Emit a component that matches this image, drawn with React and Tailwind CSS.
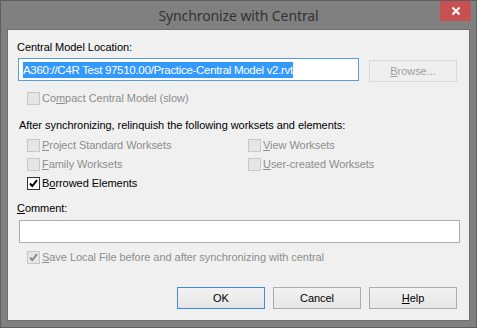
import React from "react";

const ui = { fontFamily: '"Liberation Sans", Arial, sans-serif' };

function Check({ color = "#000" }) {
  return (
    <svg width="11" height="11" viewBox="0 0 11 11" className="block">
      <path d="M2 5.5 L4.3 8 L9 2.2" fill="none" stroke={color} strokeWidth="1.9" />
    </svg>
  );
}

function CheckBox({ label, accel, checked = false, disabled = false, className = "" }) {
  const i = label.indexOf(accel);
  return (
    <div className={`flex items-center h-[13px] ${className}`}>
      <div
        className={`w-[13px] h-[13px] flex items-center justify-center border ${
          disabled ? "border-[#c8c8c8] bg-[#e6e6e6]" : "border-[#333] bg-white"
        }`}
      >
        {checked && <Check color={disabled ? "#8a8a8a" : "#000"} />}
      </div>
      <span
        className={`ml-[2px] text-[11px] leading-[13px] tracking-[-0.05px] ${
          disabled ? "text-[#8d8d8d]" : "text-black"
        }`}
      >
        {i >= 0 ? (
          <>
            {label.slice(0, i)}
            <u className="underline-offset-1">{accel}</u>
            {label.slice(i + 1)}
          </>
        ) : (
          label
        )}
      </span>
    </div>
  );
}

function Button({ children, primary, disabled }) {
  return (
    <div
      className={`w-[88px] h-[22px] flex items-center justify-center text-[11px] tracking-[-0.05px] border ${
        disabled
          ? "border-[#d9d9d9] bg-[#efefef] text-[#a0a0a0]"
          : primary
          ? "border-[#3c8be0] bg-gradient-to-b from-[#f2f2f2] to-[#e6e6e6] text-black"
          : "border-[#adadad] bg-gradient-to-b from-[#f2f2f2] to-[#e6e6e6] text-black"
      }`}
    >
      {children}
    </div>
  );
}

export default function App() {
  return (
    <div className="w-[477px] h-[328px] bg-[#808080] border border-[#5e5e5e] flex flex-col" style={ui}>
      {/* title bar */}
      <div className="relative h-[28px] flex items-center justify-center">
        <span className="text-[14px] text-[#333] tracking-[-0.1px] mt-[1px]" style={{ fontFamily: '"Noto Sans", "Open Sans", sans-serif' }}>
          Synchronize with Central
        </span>
        <div className="absolute right-[5px] top-0 w-[31px] h-[20px] bg-[#c75050] flex items-center justify-center">
          <svg width="10" height="10" viewBox="0 0 10 10">
            <path d="M1.5 1.5 L8.5 8.5 M8.5 1.5 L1.5 8.5" stroke="#fff" strokeWidth="2" />
          </svg>
        </div>
      </div>

      {/* client area */}
      <div className="ml-[6px] w-[463px] h-[292px] border border-[#6f6f6f] bg-[#f0f0f0] flex flex-col px-[10px]">
        <div className="mt-[11px] ml-[-1px] text-[11px] leading-[13px] tracking-[-0.05px] text-black">Central Model Location:</div>

        <div className="flex items-start mt-[4px]">
          <div className="w-[341px] h-[23px] border border-[#569de5] bg-white flex items-center pl-[4px]">
            <span className="bg-[#3399ff] text-white text-[11.5px] leading-[16px] tracking-[-0.3px]">
              A360://C4R Test 97510.00/Practice-Central Model v2.rvt
            </span>
          </div>
          <div className="ml-[10px] mt-[2px]">
            <Button disabled>
              <span><u>B</u>rowse...</span>
            </Button>
          </div>
        </div>

        <CheckBox className="mt-[10px] ml-[9px]" label="Compact Central Model (slow)" accel="m" disabled />

        <div className="mt-[14px] ml-[1px] text-[11px] leading-[13px] tracking-[-0.05px] text-black">
          After synchronizing, relinquish the following worksets and elements:
        </div>

        <div className="flex mt-[7px] ml-[9px]">
          <div className="w-[221px] flex flex-col gap-[6px]">
            <CheckBox label="Project Standard Worksets" accel="P" disabled />
            <CheckBox label="Family Worksets" accel="F" disabled />
            <CheckBox label="Borrowed Elements" accel="o" checked />
          </div>
          <div className="flex flex-col gap-[6px]">
            <CheckBox label="View Worksets" accel="V" disabled />
            <CheckBox label="User-created Worksets" accel="U" disabled />
          </div>
        </div>

        <div className="mt-[12px] ml-[-1px] text-[11px] leading-[13px] tracking-[-0.05px] text-black">
          <u>C</u>omment:
        </div>

        <div className="mt-[5px] ml-[1px] w-[441px] h-[23px] border border-[#abadb3] bg-white" />

        <CheckBox className="mt-[8px] ml-[9px]" label="Save Local File before and after synchronizing with central" accel="S" checked disabled />

        <div className="flex justify-end gap-[8px] mt-[23px] mr-[2px]">
          <Button primary>OK</Button>
          <Button>Cancel</Button>
          <Button>
            <span><u>H</u>elp</span>
          </Button>
        </div>
      </div>
    </div>
  );
}
